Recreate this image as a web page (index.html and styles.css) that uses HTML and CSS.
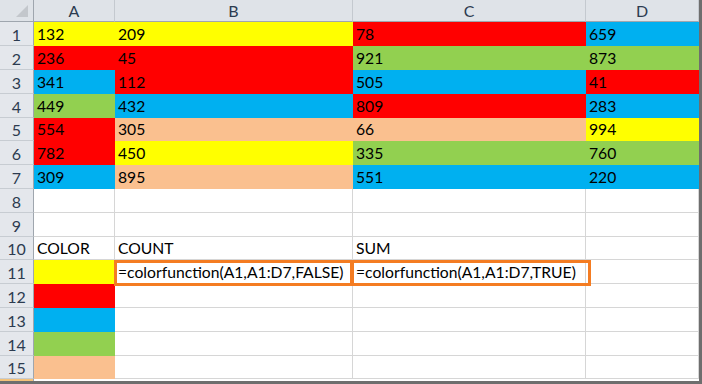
FILE: index.html
```html
<!DOCTYPE html>
<html>
<head>
<meta charset="utf-8">
<link rel="stylesheet" href="styles.css">
</head>
<body>
<div class="sheet">
  <div class="grid">
    <div class="hc corner"><svg class="tri" width="14" height="14" viewBox="0 0 14 14"><polygon points="13,1 13,13 1,13" fill="#c3c7cc"/></svg></div>
    <div class="hc">A</div><div class="hc">B</div><div class="hc">C</div><div class="hc">D</div>

    <div class="hr">1</div><div class="c y">132</div><div class="c y">209</div><div class="c r">78</div><div class="c b">659</div>
    <div class="hr">2</div><div class="c r">236</div><div class="c r">45</div><div class="c g">921</div><div class="c g">873</div>
    <div class="hr">3</div><div class="c b">341</div><div class="c r">112</div><div class="c b">505</div><div class="c r">41</div>
    <div class="hr">4</div><div class="c g">449</div><div class="c b">432</div><div class="c r">809</div><div class="c b">283</div>
    <div class="hr">5</div><div class="c r">554</div><div class="c p">305</div><div class="c p">66</div><div class="c y">994</div>
    <div class="hr">6</div><div class="c r">782</div><div class="c y">450</div><div class="c g">335</div><div class="c g">760</div>
    <div class="hr">7</div><div class="c b">309</div><div class="c p">895</div><div class="c b">551</div><div class="c b">220</div>
    <div class="hr">8</div><div class="c"></div><div class="c"></div><div class="c"></div><div class="c"></div>
    <div class="hr">9</div><div class="c"></div><div class="c"></div><div class="c"></div><div class="c"></div>
    <div class="hr">10</div><div class="c">COLOR</div><div class="c">COUNT</div><div class="c">SUM</div><div class="c"></div>
    <div class="hr">11</div><div class="c y"></div><div class="c">=colorfunction(A1,A1:D7,FALSE)</div><div class="c">=colorfunction(A1,A1:D7,TRUE)</div><div class="c"></div>
    <div class="hr">12</div><div class="c r"></div><div class="c"></div><div class="c"></div><div class="c"></div>
    <div class="hr">13</div><div class="c b"></div><div class="c"></div><div class="c"></div><div class="c"></div>
    <div class="hr">14</div><div class="c g"></div><div class="c"></div><div class="c"></div><div class="c"></div>
    <div class="hr">15</div><div class="c p"></div><div class="c"></div><div class="c"></div><div class="c"></div>
    <div class="hr sel"></div><div class="c last"></div><div class="c last"></div><div class="c last"></div><div class="c last"></div>
  </div>
  <div class="mark mark-count"></div>
  <div class="mark mark-sum"></div>
</div>
</body>
</html>
```
FILE: styles.css
```css
html, body {
  margin: 0;
  padding: 0;
  background: #ffffff;
}

.sheet {
  position: relative;
  width: 699px;
  height: 381px;
  border-right: 3px solid #6e6e6e;
  border-bottom: 3px solid #6e6e6e;
  overflow: hidden;
  font-family: Lato, "Liberation Sans", sans-serif;
}

.grid {
  display: grid;
  grid-template-columns: 34px 81px 238px 233px 113px;
  grid-template-rows: 22px 24px 24px 24px 24px 23px 24px 24px 24px 24px 23px 24px 24px 24px 24px 23px 2px;
}

.c {
  display: flex;
  align-items: flex-end;
  padding: 0 0 3px 3px;
  border-right: 1px solid #d6d6d6;
  border-bottom: 1px solid #d6d6d6;
  font-size: 15.7px;
  line-height: 16px;
  color: #000000;
  white-space: nowrap;
  overflow: visible;
}

.c.last {
  padding: 0;
  border: 0;
  overflow: hidden;
}

.y { background: #ffff00; border-color: #ffff00; }
.r { background: #ff0000; border-color: #ff0000; }
.b { background: #00b0f0; border-color: #00b0f0; }
.g { background: #92d050; border-color: #92d050; }
.p { background: #fac08f; border-color: #fac08f; }

.hc {
  display: flex;
  align-items: center;
  justify-content: center;
  background: #dfe3e8;
  border-right: 1px solid #c4c9cf;
  border-bottom: 1px solid #9fa6ae;
  color: #2c3b50;
  font-size: 16px;
  line-height: 16px;
  padding-top: 1px;
}

.corner {
  position: relative;
  border-right: 1px solid #9fa6ae;
}

.tri {
  position: absolute;
  left: 15px;
  top: 4px;
}

.hr {
  display: flex;
  align-items: center;
  justify-content: center;
  background: #e4e7ec;
  border-right: 1px solid #9fa6ae;
  border-bottom: 1px solid #c7ccd2;
  color: #2c3b50;
  font-size: 16px;
  line-height: 16px;
  padding-top: 2px;
}

.hr.sel {
  background: #f3c27a;
  border-bottom: 0;
  padding: 0;
}

.mark {
  position: absolute;
  top: 260px;
  height: 26px;
  box-sizing: border-box;
  border: 3px solid #f47c22;
}

.mark-count {
  left: 114px;
  width: 239px;
}

.mark-sum {
  left: 351px;
  width: 240px;
}
```
